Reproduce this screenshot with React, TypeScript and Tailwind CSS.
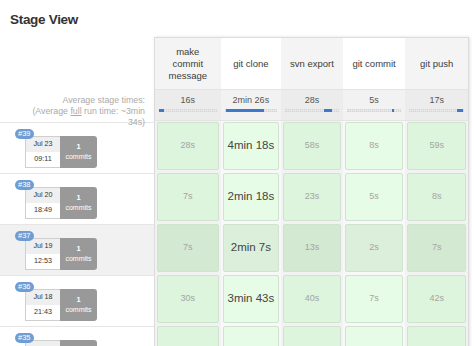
interface Stage {
  name: string[];
  avg: string;
  barStart: number;
  barEnd: number;
  width: string;
  headBg: string;
  avgBg: string;
  bodyBg: string;
  cellBg: string;
  hoverBg: string;
  big?: boolean;
}

const STAGES: Stage[] = [
  {
    name: ['make', 'commit', 'message'],
    avg: '16s',
    barStart: 0,
    barEnd: 9,
    width: 'w-[66px]',
    headBg: 'bg-[#f4f4f4]',
    avgBg: 'bg-[#ececec]',
    bodyBg: 'bg-[#f2f2f2]',
    cellBg: 'bg-[#ddf5dc]',
    hoverBg: 'bg-[#d4e9d2]',
  },
  {
    name: ['git clone'],
    avg: '2min 26s',
    barStart: 2,
    barEnd: 75,
    width: 'w-[61px]',
    headBg: 'bg-white',
    avgBg: 'bg-[#f2f2f2]',
    bodyBg: 'bg-[#f8f8f8]',
    cellBg: 'bg-[#e7fce6]',
    hoverBg: 'bg-[#dcefda]',
    big: true,
  },
  {
    name: ['svn export'],
    avg: '28s',
    barStart: 72,
    barEnd: 88,
    width: 'w-[62px]',
    headBg: 'bg-[#f4f4f4]',
    avgBg: 'bg-[#ececec]',
    bodyBg: 'bg-[#f2f2f2]',
    cellBg: 'bg-[#ddf5dc]',
    hoverBg: 'bg-[#d4e9d2]',
  },
  {
    name: ['git commit'],
    avg: '5s',
    barStart: 82,
    barEnd: 87,
    width: 'w-[63px]',
    headBg: 'bg-white',
    avgBg: 'bg-[#f2f2f2]',
    bodyBg: 'bg-[#f8f8f8]',
    cellBg: 'bg-[#e7fce6]',
    hoverBg: 'bg-[#dcefda]',
  },
  {
    name: ['git push'],
    avg: '17s',
    barStart: 88,
    barEnd: 98,
    width: 'w-[63px]',
    headBg: 'bg-[#f4f4f4]',
    avgBg: 'bg-[#ececec]',
    bodyBg: 'bg-[#f2f2f2]',
    cellBg: 'bg-[#ddf5dc]',
    hoverBg: 'bg-[#d4e9d2]',
  },
];

interface Build {
  id: number;
  date: string;
  time: string;
  times: string[];
  hover?: boolean;
}

// last row is cut off by the window, only its top edge shows
const BUILDS: Build[] = [
  { id: 39, date: 'Jul 23', time: '09:11', times: ['28s', '4min 18s', '58s', '8s', '59s'] },
  { id: 38, date: 'Jul 20', time: '18:49', times: ['7s', '2min 18s', '23s', '5s', '8s'] },
  { id: 37, date: 'Jul 19', time: '12:53', times: ['7s', '2min 7s', '13s', '2s', '7s'], hover: true },
  { id: 36, date: 'Jul 18', time: '21:43', times: ['30s', '3min 43s', '40s', '7s', '42s'] },
  { id: 35, date: '', time: '', times: ['', '', '', '', ''] },
];

export default function App() {
  return (
    <div className="h-[346px] w-[474px] overflow-hidden bg-white font-['Liberation_Sans',Arial,sans-serif]">
      <h2 className="h-[37px] pl-[10px] pt-[12px] text-[13.5px] leading-[16px] font-bold tracking-[-0.3px] text-[#333]">
        Stage View
      </h2>
      <div className="flex">
        <div className="w-[154px] shrink-0">
          <div className="h-[53px]" />
          <div className="relative z-10 h-[32px] pt-[5px] pr-[9px] text-right text-[8.8px] leading-[11px] text-[#aaa]">
            <div>Average stage times:</div>
            <div>
              (Average <span className="underline">full</span> run time: ~3min
            </div>
            <div>34s)</div>
          </div>
          {BUILDS.map((b) => (
            <BuildRow key={b.id} build={b} />
          ))}
        </div>

        <div className="w-[315px] shrink-0 border-x border-t border-[#dcdcdc] shadow-[1px_0_3px_rgba(0,0,0,0.12)]">
          <div className="flex h-[52px] border-b border-[#e4e4e4]">
            {STAGES.map((s) => (
              <div
                key={s.avg}
                className={`${s.width} ${s.headBg} flex flex-col items-center justify-center text-center text-[9.5px] leading-[12px] text-[#3c3c3c]`}
              >
                {s.name.map((line) => (
                  <div key={line}>{line}</div>
                ))}
              </div>
            ))}
          </div>
          <div className="flex h-[31px] border-b border-[#e4e4e4]">
            {STAGES.map((s) => (
              <div key={s.avg} className={`${s.width} ${s.avgBg} px-[4px] pt-[5px]`}>
                <div className="text-center text-[9px] leading-[11px] text-[#555]">{s.avg}</div>
                <div className="relative mt-[3px] h-[3px] border-y border-dotted border-[#d2d2d2] bg-[#e6e6e6]">
                  <div
                    className="absolute -top-[1px] h-[3px] bg-[#3f78c6]"
                    style={{ left: `${s.barStart}%`, width: `${s.barEnd - s.barStart}%` }}
                  />
                </div>
              </div>
            ))}
          </div>
          {BUILDS.map((b) => (
            <div key={b.id} className="flex h-[51px]">
              {STAGES.map((s, i) => (
                <div key={s.avg} className={`${s.width} ${s.bodyBg} px-[2px] pb-[2px] pt-[1px]`}>
                  <div
                    className={`flex h-full items-center justify-center rounded-[2px] border border-[#cfe3cf] ${
                      b.hover ? s.hoverBg : s.cellBg
                    }`}
                  >
                    {s.big ? (
                      <span className="text-[11.5px] text-[#444]">{b.times[i]}</span>
                    ) : (
                      <span className="text-[9px] text-[#a4a4a4]">{b.times[i]}</span>
                    )}
                  </div>
                </div>
              ))}
            </div>
          ))}
        </div>
      </div>
    </div>
  );
}

function BuildRow({ build }: { build: Build }) {
  return (
    <div
      className={`relative h-[51px] border-t border-[#e6e6e6] pl-[25px] pt-[13px] ${
        build.hover ? 'bg-[#f1f1f1]' : 'bg-white'
      }`}
    >
      <div className="flex h-[32px] w-[72px]">
        <div className="flex w-[35px] flex-col border border-r-0 border-[#cfcfcf] bg-white text-center text-[7.2px] text-[#333]">
          <div className="flex flex-1 items-center justify-center bg-[#efefef]">{build.date}</div>
          <div className="flex flex-1 items-center justify-center">{build.time}</div>
        </div>
        <div className="flex flex-1 flex-col items-center justify-center rounded-r-[3px] bg-[#999] text-[7px] leading-[10px] text-white">
          {build.date ? (
            <>
              <span className="text-[7.5px] font-bold">1</span>
              <span>commits</span>
            </>
          ) : null}
        </div>
      </div>
      <span className="absolute left-[15px] top-[6px] rounded-full bg-[#6f9dd3] px-[3px] text-[7.5px] leading-[10px] text-white">
        #{build.id}
      </span>
    </div>
  );
}
